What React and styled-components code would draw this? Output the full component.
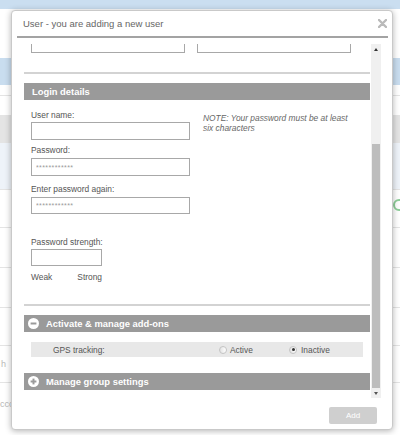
import React from "react";
import styled, { createGlobalStyle } from "styled-components";

const Global = createGlobalStyle`
  html, body {
    margin: 0;
    padding: 0;
    background: #fff;
  }
  body {
    font-family: "Liberation Sans", Arial, sans-serif;
  }
`;

const Page = styled.div`
  position: relative;
  width: 400px;
  height: 435px;
  overflow: hidden;
  background: #fff;
`;

/* page behind the dialog */
const Backdrop = styled.div`
  display: flex;
  flex-direction: column;
`;

const Band = styled.div`
  height: ${(p) => p.$h}px;
  background: ${(p) => p.$bg || "#fff"};
  border-bottom: ${(p) => (p.$line ? "1px solid #e4e4e4" : "none")};
  display: flex;
  align-items: ${(p) => (p.$top ? "flex-start" : "center")};
  justify-content: space-between;
  font-size: 9px;
  color: #b8b8b8;
  box-sizing: border-box;
`;

const BgText = styled.span`
  padding-left: ${(p) => p.$pad || 0}px;
  white-space: nowrap;
`;

const StatusDot = styled.span`
  width: 8px;
  height: 8px;
  margin-top: 9px;
  border-radius: 50%;
  border: 2px solid #8fcf9a;
  margin-right: -5px;
`;

const Dialog = styled.div`
  position: absolute;
  top: 10px;
  left: 11px;
  width: 382px;
  height: 420px;
  box-sizing: border-box;
  background: #fff;
  border: 1px solid #c9c9c9;
  border-radius: 4px;
  box-shadow: 0 1px 6px rgba(0, 0, 0, 0.3);
  display: flex;
  flex-direction: column;
`;

const TitleBar = styled.div`
  height: 25px;
  margin: 0 4px 0 5px;
  border-bottom: 2px solid #a3a3a3;
  display: flex;
  align-items: center;
  justify-content: space-between;
`;

const Title = styled.span`
  padding-left: 6px;
  font-size: 9.5px;
  color: #666;
`;

const Close = styled.svg`
  width: 9px;
  height: 9px;
  margin-right: 1px;
`;

const Body = styled.div`
  margin-top: 6px;
  height: 354px;
  display: flex;
`;

const Viewport = styled.div`
  margin-left: 5px;
  width: 354px;
  overflow: hidden;
`;

const Content = styled.div`
  margin-top: -8px;
  padding: 0 1px 0 7px;
`;

const TopRow = styled.div`
  display: flex;
  gap: 12px;
  padding-left: 7px;
`;

const Input = styled.input`
  display: block;
  box-sizing: border-box;
  width: ${(p) => p.$w || 159}px;
  height: ${(p) => p.$h || 18}px;
  margin: ${(p) => p.$mt || 0}px 0 0 0;
  padding: 0 4px;
  border: 1px solid #a8a8a8;
  border-radius: 0;
  background: #fff;
  outline: none;
  font-family: "Liberation Sans", Arial, sans-serif;
  font-size: 7px;
  letter-spacing: 0.4px;
  color: #9a9a9a;
`;

const Divider = styled.div`
  margin-top: ${(p) => p.$mt}px;
  height: 2px;
  background: #d3d3d3;
`;

const SectionHeader = styled.div`
  margin-top: ${(p) => p.$mt}px;
  height: 17px;
  background: #9a9a9a;
  display: flex;
  align-items: center;
  gap: 7px;
  padding-left: ${(p) => (p.$icon ? 4 : 8)}px;
  font-size: 9.4px;
  font-weight: bold;
  color: #fff;
`;

const LoginGrid = styled.div`
  display: flex;
`;

const FieldColumn = styled.div`
  width: 172px;
  padding-left: 7px;
`;

const Label = styled.div`
  margin-top: ${(p) => p.$mt}px;
  height: 12px;
  line-height: 12px;
  font-size: 8.4px;
  color: #555;
`;

const StrengthScale = styled.div`
  margin-top: 5px;
  width: 71px;
  display: flex;
  justify-content: space-between;
  height: 12px;
  line-height: 12px;
  font-size: 8.4px;
  color: #555;
`;

const Note = styled.div`
  margin-top: 13px;
  width: 150px;
  font-size: 8.4px;
  line-height: 10px;
  font-style: italic;
  color: #666;
`;

const AddonRow = styled.div`
  margin: 10px 7px 0 7px;
  height: 15px;
  background: #e8e8e8;
  display: grid;
  grid-template-columns: 188px 70px auto;
  align-items: center;
  font-size: 8.4px;
  color: #555;
`;

const AddonName = styled.span`
  padding-left: 22px;
`;

const RadioOption = styled.label`
  display: flex;
  align-items: center;
  gap: ${(p) => (p.$checked ? 4 : 3)}px;
`;

const RadioCircle = styled.span`
  width: 8px;
  height: 8px;
  box-sizing: border-box;
  border-radius: 50%;
  border: 1px solid #c4c4c4;
  background: linear-gradient(90deg, #e2e2e2, #fff);
  display: flex;
  align-items: center;
  justify-content: center;

  &::after {
    content: "";
    width: 3px;
    height: 3px;
    border-radius: 50%;
    background: ${(p) => (p.$checked ? "#333" : "transparent")};
  }
`;

const Scrollbar = styled.div`
  width: 10px;
  background: #f0f0f0;
  display: flex;
  flex-direction: column;
`;

const ArrowBox = styled.div`
  height: 10px;
  display: flex;
  align-items: center;
  justify-content: center;

  &::before {
    content: "";
    border-left: 2.5px solid transparent;
    border-right: 2.5px solid transparent;
    ${(p) =>
      p.$down
        ? "border-top: 3px solid #555;"
        : "border-bottom: 3px solid #333;"}
  }
`;

const TrackGap = styled.div`
  flex: 1;
`;

const Thumb = styled.div`
  height: 244px;
  margin: 0 1px 0 1px;
  background: #bdbdbd;
`;

const Footer = styled.div`
  flex: 1;
  display: flex;
  justify-content: flex-end;
  align-items: flex-start;
  padding: 9px 15px 0 0;
`;

const AddButton = styled.button`
  width: 48px;
  height: 17px;
  border: none;
  border-radius: 2px;
  background: #cfcfcf;
  color: #fff;
  font-family: "Liberation Sans", Arial, sans-serif;
  font-size: 8px;
  padding: 0;
`;

const HeaderIcon = ({ plus }) => (
  <svg width="11" height="11" viewBox="0 0 11 11">
    <circle cx="5.5" cy="5.5" r="5.5" fill="#fff" />
    <path d="M2.6 5.5h5.8" stroke="#9a9a9a" strokeWidth="2" />
    {plus && <path d="M5.5 2.6v5.8" stroke="#9a9a9a" strokeWidth="2" />}
  </svg>
);

export default function App() {
  return (
    <>
      <Global />
      <Page>
        <Backdrop>
          <Band $h={9} $bg="#cadef0" />
          <Band $h={49} />
          <Band $h={27} $bg="#c9ddef" />
          <Band $h={11} $line />
          <Band $h={19} />
          <Band $h={28} $bg="#e4e4e4" />
          <Band $h={47} $bg="#eef3f9" $line />
          <Band $h={38} $line $top>
            <span />
            <StatusDot />
          </Band>
          <Band $h={40} $line />
          <Band $h={40} $line />
          <Band $h={38} $line />
          <Band $h={37} $line>
            <BgText $pad={1}>h</BgText>
          </Band>
          <Band $h={42}>
            <BgText>cco</BgText>
          </Band>
        </Backdrop>

        <Dialog>
          <TitleBar>
            <Title>User - you are adding a new user</Title>
            <Close viewBox="0 0 9 9">
              <path
                d="M1 1L8 8M8 1L1 8"
                stroke="#bababa"
                strokeWidth="2.4"
                strokeLinecap="round"
              />
            </Close>
          </TitleBar>

          <Body>
            <Viewport>
              <Content>
                <TopRow>
                  <Input $w={154} $h={17} readOnly />
                  <Input $w={154} $h={17} readOnly />
                </TopRow>
                <Divider $mt={19} />

                <SectionHeader $mt={9}>Login details</SectionHeader>
                <LoginGrid>
                  <FieldColumn>
                    <Label $mt={9}>User name:</Label>
                    <Input $mt={1} readOnly />
                    <Label $mt={4}>Password:</Label>
                    <Input $mt={2} readOnly value="************" />
                    <Label $mt={7}>Enter password again:</Label>
                    <Input $mt={2} $h={17} readOnly value="************" />
                    <Label $mt={22}>Password strength:</Label>
                    <Input $mt={1} $w={71} $h={17} readOnly />
                    <StrengthScale>
                      <span>Weak</span>
                      <span>Strong</span>
                    </StrengthScale>
                  </FieldColumn>
                  <Note>NOTE: Your password must be at least six characters</Note>
                </LoginGrid>

                <Divider $mt={21} />
                <SectionHeader $mt={9} $icon>
                  <HeaderIcon />
                  Activate &amp; manage add-ons
                </SectionHeader>
                <AddonRow>
                  <AddonName>GPS tracking:</AddonName>
                  <RadioOption>
                    <RadioCircle />
                    Active
                  </RadioOption>
                  <RadioOption $checked>
                    <RadioCircle $checked />
                    Inactive
                  </RadioOption>
                </AddonRow>

                <SectionHeader $mt={16} $icon>
                  <HeaderIcon plus />
                  Manage group settings
                </SectionHeader>
              </Content>
            </Viewport>
            <Scrollbar>
              <ArrowBox />
              <TrackGap />
              <Thumb />
              <ArrowBox $down />
            </Scrollbar>
          </Body>

          <Footer>
            <AddButton>Add</AddButton>
          </Footer>
        </Dialog>
      </Page>
    </>
  );
}
